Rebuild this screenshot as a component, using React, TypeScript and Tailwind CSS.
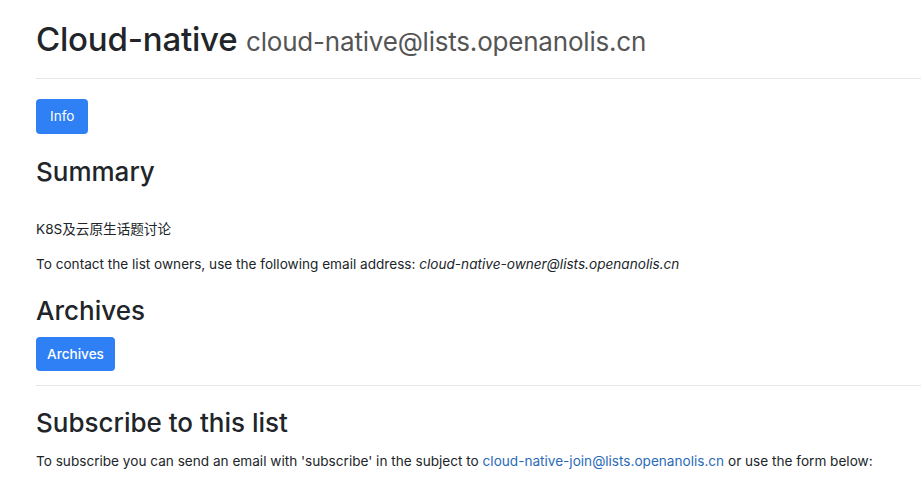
import React from 'react';

const font = { fontFamily: 'Inter, "Noto Sans CJK SC", sans-serif' };

const App: React.FC = () => {
  return (
    <div className="min-h-screen bg-white text-[#212529] pl-[36px]" style={font}>
      <h1 className="pt-[19px] text-[33px] leading-[40px] font-medium tracking-[-0.2px]">
        Cloud-native{' '}
        <span className="text-[26px] font-normal text-[#555]">cloud-native@lists.openanolis.cn</span>
      </h1>

      <hr className="mt-[16px] border-t border-[#e6e6e6]" />

      <button className="mt-[20px] h-[35px] px-[14px] rounded-[4px] bg-[#2f7ff5] text-white text-[13.6px]">
        Info
      </button>

      <h2 className="mt-[21px] text-[26px] leading-[34px] font-medium">Summary</h2>

      <p className="mt-[30px] text-[13.6px] leading-[20px]">K8S及云原生话题讨论</p>
      <p className="mt-[15px] text-[13.6px] leading-[20px]">
        To contact the list owners, use the following email address:{' '}
        <em>cloud-native-owner@lists.openanolis.cn</em>
      </p>

      <h2 className="mt-[20px] text-[26px] leading-[34px] font-medium">Archives</h2>
      <button className="mt-[9px] h-[34px] px-[11px] rounded-[4px] bg-[#2f7ff5] text-white text-[13.6px] font-medium">
        Archives
      </button>

      <hr className="mt-[14px] border-t border-[#e6e6e6]" />

      <h2 className="mt-[20px] text-[26px] leading-[34px] font-medium">Subscribe to this list</h2>
      <p className="mt-[11px] text-[13.6px] leading-[20px]">
        To subscribe you can send an email with 'subscribe' in the subject to{' '}
        <a className="text-[#2a6bb8]">cloud-native-join@lists.openanolis.cn</a> or use the form below:
      </p>
    </div>
  );
};

export default App;
